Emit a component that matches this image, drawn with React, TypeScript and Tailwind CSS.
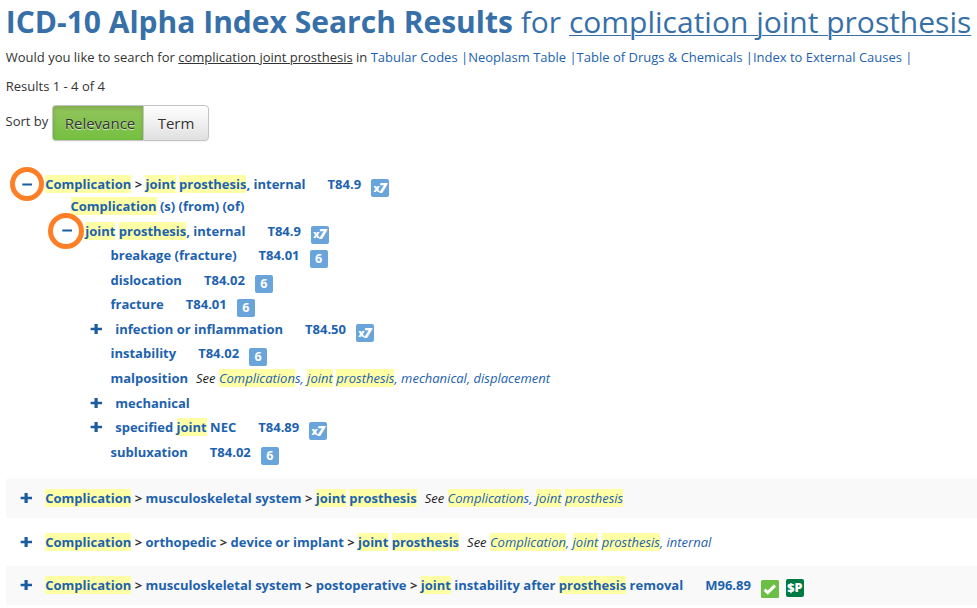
import { Fragment } from "react";

type Badge = "x7" | "6" | "check" | "sp";

interface Entry {
  toggle?: boolean;
  path: string[];
  code?: string;
  badges?: Badge[];
  see?: string;
}

// Words wrapped in [ ] are search hits
const renderHits = (text: string) =>
  text.split(/(\[[^\]]+\])/).map((part, i) =>
    part.startsWith("[") ? (
      <span key={i} className="bg-[#ffffa5]">
        {part.slice(1, -1)}
      </span>
    ) : (
      <Fragment key={i}>{part}</Fragment>
    )
  );

const children: (Entry & { gap: string })[] = [
  { path: ["breakage (fracture)"], code: "T84.01", badges: ["6"], gap: "mb-px" },
  { path: ["dislocation"], code: "T84.02", badges: ["6"], gap: "" },
  { path: ["fracture"], code: "T84.01", badges: ["6"], gap: "mb-px" },
  { toggle: true, path: ["infection or inflammation"], code: "T84.50", badges: ["x7"], gap: "" },
  { path: ["instability"], code: "T84.02", badges: ["6"], gap: "mb-px" },
  { path: ["malposition"], see: "[Complication]s, [joint] [prosthesis], mechanical, displacement", gap: "mb-px" },
  { toggle: true, path: ["mechanical"], gap: "" },
  { toggle: true, path: ["specified [joint] NEC"], code: "T84.89", badges: ["x7"], gap: "mb-px" },
  { path: ["subluxation"], code: "T84.02", badges: ["6"], gap: "" },
];

const PlusIcon = () => (
  <svg width="12" height="12" viewBox="0 0 12 12" fill="#1a5c9e" className="shrink-0">
    <path d="M4.5 1h3.2v3.8H12v2.4H7.7V11H4.5V7.2H.6V4.8h3.9z" />
  </svg>
);

const MinusIcon = () => (
  <svg width="10" height="3" viewBox="0 0 10 3" fill="#1a5c9e" className="shrink-0">
    <path d="M.3 .5H10v2H.3z" />
  </svg>
);

const BadgeIcon = ({ kind }: { kind: Badge }) => {
  if (kind === "check") {
    return (
      <svg width="18" height="18" viewBox="0 0 18 18" className="mt-[9px] shrink-0">
        <rect width="18" height="18" rx="1.5" fill="#6cbe45" />
        <path d="M3.6 9.6l3.2 3L14 5.4" fill="none" stroke="#fff" strokeWidth="3" />
      </svg>
    );
  }
  if (kind === "sp") {
    return (
      <span className="mt-[7px] flex h-[18px] w-[18px] shrink-0 items-center justify-center rounded-[2px] bg-[#007a45] text-[12.5px] leading-none font-extrabold text-white">
        $P
      </span>
    );
  }
  return (
    <span className="mt-[8px] flex h-[18px] w-[18px] shrink-0 items-center justify-center rounded-[2px] bg-[#69a5db] text-[12.5px] leading-none font-bold text-white">
      {kind === "x7" ? (
        <span className="flex items-center pb-px font-extrabold">
          <span className="text-[10px]">x</span>
          <span className="-ml-px text-[14px] italic">7</span>
        </span>
      ) : (
        kind
      )}
    </span>
  );
};

const EntryText = ({ entry }: { entry: Entry }) => (
  <>
    <span className="font-bold text-[#1d62ae]">
      {entry.path.map((step, i) => (
        <Fragment key={i}>
          {i > 0 && <span className="text-[#333]"> &gt; </span>}
          {renderHits(step)}
        </Fragment>
      ))}
    </span>
    {entry.see && (
      <span className="ml-[8px] italic text-[#1d62ae]">
        <span className="text-[#222]">See </span>
        {renderHits(entry.see)}
      </span>
    )}
    {entry.code && <span className="ml-[22px] font-bold text-[#1d62ae]">{entry.code}</span>}
    {entry.badges && (
      <span className="ml-[10px] flex items-center gap-[7px]">
        {entry.badges.map((b) => (
          <BadgeIcon key={b} kind={b} />
        ))}
      </span>
    )}
  </>
);

const ResultRow = ({ entry, className }: { entry: Entry; className: string }) => (
  <div className={`ml-[6px] flex items-center pl-[14px] ${className}`}>
    <PlusIcon />
    <div className="ml-[13.25px] flex items-center">
      <EntryText entry={entry} />
    </div>
  </div>
);

const App = () => {
  return (
    <div className="relative h-[608px] w-[977px] overflow-hidden whitespace-nowrap bg-white font-['Open_Sans',sans-serif] text-[13px] leading-[18px] text-[#333]">
      <h1 className="h-[48px] pl-[5.75px] text-[30px] leading-[44px] text-[#3770a9]">
        <b>ICD-10 Alpha Index Search Results</b> for{" "}
        <u className="decoration-1 underline-offset-2">complication joint prosthesis</u>
      </h1>

      <p className="h-[29px] pl-[5.75px]">
        Would you like to search for <u>complication joint prosthesis</u> in{" "}
        <span className="text-[#1d62ae]">
          <a>Tabular Codes</a> |<a>Neoplasm Table</a> |<a>Table of Drugs &amp; Chemicals</a> |
          <a>Index to External Causes</a> |
        </span>
      </p>
      <p className="h-[28px] pl-[5.75px]">Results 1 - 4 of 4</p>

      {/* Sort buttons */}
      <div className="flex h-[36px] pl-[5.5px]">
        <span className="mt-[7px] w-[46.5px]">Sort by</span>
        <div className="flex h-[36px] rounded-[4px] text-[15px] shadow-[0_1px_2px_rgba(0,0,0,0.05)]">
          <button className="w-[91px] rounded-l-[4px] border border-r-0 border-[#c4c4c4] bg-linear-to-b from-[#93c45c] to-[#74c040] pl-[4px] shadow-[inset_0_2px_4px_rgba(0,0,0,0.15)] [text-shadow:0_1px_1px_rgba(255,255,255,0.75)]">
            Relevance
          </button>
          <button className="w-[66px] rounded-r-[4px] border border-[#c4c4c4] bg-linear-to-b from-white to-[#e0e0e0] [text-shadow:0_1px_1px_rgba(255,255,255,0.75)]">
            Term
          </button>
        </div>
      </div>

      {/* Expanded result */}
      <div className="mt-[31px] flex h-[24px] items-center pl-[22px]">
        <MinusIcon />
        <div className="ml-[13.25px] flex items-center">
          <EntryText entry={{ path: ["[Complication]", "[joint] [prosthesis], internal"], code: "T84.9", badges: ["x7"] }} />
        </div>
      </div>
      <div className="flex h-[20px] items-center pl-[70.5px]">
        <EntryText entry={{ path: ["[Complication] (s) (from) (of)"] }} />
      </div>
      <div className="mt-[2px] flex h-[25px] items-center pl-[62px]">
        <MinusIcon />
        <div className="ml-[13.25px] flex items-center">
          <EntryText entry={{ path: ["[joint] [prosthesis], internal"], code: "T84.9", badges: ["x7"] }} />
        </div>
      </div>
      <div className="h-[236px]">
        {children.map((child) => (
          <div
            key={child.path[0]}
            className={`flex h-[24px] items-center ${child.gap} ${child.toggle ? "pl-[90px]" : "pl-[110.5px]"}`}
          >
            {child.toggle && <PlusIcon />}
            <div className={`flex items-center ${child.toggle ? "ml-[13.25px]" : ""}`}>
              <EntryText entry={child} />
            </div>
          </div>
        ))}
      </div>

      {/* Collapsed results */}
      <ResultRow
        className="h-[39px] bg-[#f9f9f9] pb-[2px]"
        entry={{
          path: ["[Complication]", "musculoskeletal system", "[joint] [prosthesis]"],
          see: "[Complication]s, [joint] [prosthesis]",
        }}
      />
      <ResultRow
        className="h-[48px]"
        entry={{
          path: ["[Complication]", "orthopedic", "device or implant", "[joint] [prosthesis]"],
          see: "[Complication], [joint] [prosthesis], internal",
        }}
      />
      <ResultRow
        className="h-[39px] bg-[#f9f9f9] pb-[2px]"
        entry={{
          path: ["[Complication]", "musculoskeletal system", "postoperative", "[joint] instability after [prosthesis] removal"],
          code: "M96.89",
          badges: ["check", "sp"],
        }}
      />

      {/* Callout rings over the collapse toggles */}
      <div className="absolute left-[10px] top-[167px] h-[34px] w-[34px] rounded-full border-5 border-[#ff7f27]" />
      <div className="absolute left-[48px] top-[213px] h-[36px] w-[36px] rounded-full border-5 border-[#ff7f27]" />
    </div>
  );
};

export default App;
